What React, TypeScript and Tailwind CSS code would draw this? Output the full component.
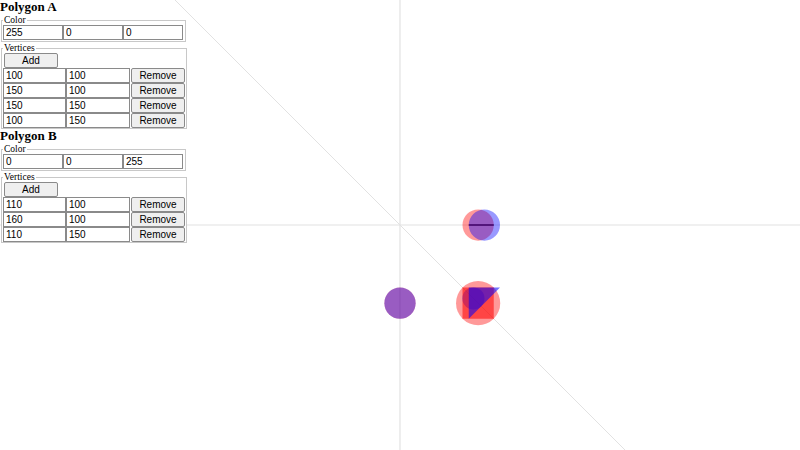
import React from 'react';

type Pt = [number, number];

interface Poly {
  name: string;
  color: [number, number, number];
  vertices: Pt[];
}

const polygons: Poly[] = [
  {
    name: 'Polygon A',
    color: [255, 0, 0],
    vertices: [
      [100, 100],
      [150, 100],
      [150, 150],
      [100, 150],
    ],
  },
  {
    name: 'Polygon B',
    color: [0, 0, 255],
    vertices: [
      [110, 100],
      [160, 100],
      [110, 150],
    ],
  },
];

const OX = 400;
const OY = 225;
const S = 0.625;

const axes: Pt[] = [
  [1, 0],
  [0, 1],
  [Math.SQRT1_2, Math.SQRT1_2],
];

function project(p: Poly, a: Pt) {
  const vals = p.vertices.map(([x, y]) => x * a[0] + y * a[1]);
  return [Math.min(...vals), Math.max(...vals)];
}

const rgba = (c: [number, number, number], a: number) => `rgba(${c[0]},${c[1]},${c[2]},${a})`;

function Canvas() {
  const [a0, a1] = project(polygons[0], axes[0]);
  const [b0, b1] = project(polygons[1], axes[0]);
  const lo = Math.max(a0, b0);
  const hi = Math.min(a1, b1);

  return (
    <svg className="absolute inset-0" width={800} height={450} viewBox="0 0 800 450">
      <line x1={400} y1={0} x2={400} y2={450} stroke="#e2e2e2" strokeWidth={1.2} />
      <line x1={0} y1={225} x2={800} y2={225} stroke="#e2e2e2" strokeWidth={1.2} />
      <line x1={175} y1={0} x2={625} y2={450} stroke="#e2e2e2" strokeWidth={1} />

      {/* overlap on x axis */}
      <line x1={OX + lo * S} y1={OY} x2={OX + hi * S} y2={OY} stroke="#000" strokeWidth={1.5} />

      {/* projections */}
      {axes.map((ax, i) =>
        polygons.map((p) => {
          const [mn, mx] = project(p, ax);
          const mid = ((mn + mx) / 2) * S;
          const r = ((mx - mn) / 2) * S;
          return (
            <circle
              key={p.name + i}
              cx={OX + ax[0] * mid}
              cy={OY + ax[1] * mid}
              r={r}
              fill={rgba(p.color, 0.4)}
            />
          );
        })
      )}

      {polygons.map((p) => (
        <polygon
          key={p.name}
          points={p.vertices.map(([x, y]) => `${OX + x * S},${OY + y * S}`).join(' ')}
          fill={rgba(p.color, 0.55)}
        />
      ))}
    </svg>
  );
}

const inputCls =
  "block h-[15px] border border-[#8a8a8a] bg-white px-[2px] text-[10px] leading-[13px] text-black font-['Liberation_Sans',Arial,sans-serif] outline-none";
const btnCls =
  "block h-[15px] border border-[#8a8a8a] rounded-[2px] bg-[#efefef] text-[10px] leading-[13px] text-black font-['Liberation_Sans',Arial,sans-serif]";
const legendCls = "text-[9.5px] leading-[10px] px-[1px] font-['Liberation_Serif',serif] text-black";

function PolygonEditor({ poly }: { poly: Poly }) {
  return (
    <div className="h-[129px]">
      <h3 className="text-[13px] leading-[13px] font-bold font-['Liberation_Serif',serif]">{poly.name}</h3>
      <fieldset className="mt-[2px] ml-[1px] w-[185px] border border-[#c8c8c8] bg-white px-[1px] pb-[1px]">
        <legend className={legendCls}>Color</legend>
        <div className="flex">
          {poly.color.map((c, i) => (
            <input key={i} className={`${inputCls} w-[60px]`} defaultValue={String(c)} />
          ))}
        </div>
      </fieldset>
      <fieldset className="mt-[1px] ml-[1px] w-[185px] border border-[#c8c8c8] bg-white px-[1px]">
        <legend className={legendCls}>Vertices</legend>
        <div className="flex flex-col">
          <button className={`${btnCls} ml-[1px] w-[54px]`}>Add</button>
          {poly.vertices.map(([x, y], i) => (
            <div key={i} className="flex">
              <input className={`${inputCls} w-[63px]`} defaultValue={String(x)} />
              <input className={`${inputCls} w-[64px]`} defaultValue={String(y)} />
              <button className={`${btnCls} ml-[1px] w-[54px]`}>Remove</button>
            </div>
          ))}
        </div>
      </fieldset>
    </div>
  );
}

export default function App() {
  return (
    <div className="relative w-[800px] h-[450px] overflow-hidden bg-white">
      <Canvas />
      <div className="relative w-[188px]">
        {polygons.map((p) => (
          <PolygonEditor key={p.name} poly={p} />
        ))}
      </div>
    </div>
  );
}
